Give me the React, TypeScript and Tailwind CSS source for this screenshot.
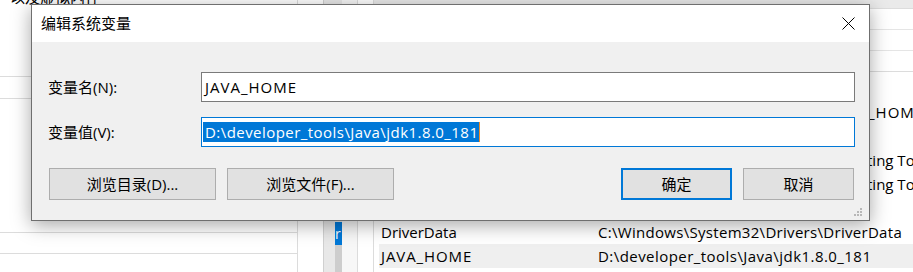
import React from 'react'

const ui = "font-['Open_Sans','Noto_Sans_CJK_SC',sans-serif]"

//=========Background window rows=========

const rows = [
  { name: '', value: '_HOME', pad: 'pl-[270px] tracking-[1px]' },
  { name: '', value: '', pad: '' },
  { name: '', value: 'ting Tools', pad: 'pl-[269px]' },
  { name: '', value: 'ting Tools', pad: 'pl-[269px]' },
  { name: '', value: '', pad: '' },
  { name: 'DriverData', value: 'C:\\Windows\\System32\\Drivers\\DriverData', pad: 'tracking-[0.3px]' },
  {
    name: 'JAVA_HOME',
    value: 'D:\\developer_tools\\Java\\jdk1.8.0_181',
    pad: 'tracking-[0.45px]',
    active: true,
  },
]

function WinButton({
  label,
  width,
  primary = false,
}: {
  label: string
  width: string
  primary?: boolean
}): React.ReactElement {
  return (
    <button
      className={`${width} h-[32px] bg-[#e1e1e1] text-[15px] text-black ${
        primary ? 'border-2 border-[#0078d7]' : 'border border-[#adadad]'
      }`}
    >
      {label}
    </button>
  )
}

export default function App(): React.ReactElement {
  return (
    <div className={`relative w-[913px] h-[272px] overflow-hidden bg-white ${ui} text-[15px] text-black`}>
      {/* =========Background window========= */}
      <div className="flex h-full">
        <div className="w-[298px] shrink-0 h-full border-r border-[#dcdcdc] flex flex-col">
          <div className="h-[89px] pl-[10px] -mt-[13px] leading-[20px]">以及虚拟内存</div>
          <div className="h-[22px] border-t border-[#dcdcdc]" />
          <div className="flex-1 border-t border-[#dcdcdc]" />
          <div className="h-[21px] border-t border-[#dcdcdc] bg-white" />
          <div className="h-[19px] border-t border-[#dcdcdc]" />
        </div>
        <div className="w-[25px] shrink-0 h-full bg-white" />
        <div className="w-[12px] shrink-0 h-full bg-[#e8e8e8] border-l border-[#d0d0d0]" />
        <div className="w-[7px] shrink-0 h-full flex flex-col">
          <div className="h-[222px] bg-[#e8e8e8]" />
          <div className="h-[23px] bg-[#0078d7] text-white text-[14px] leading-[23px] overflow-hidden">r</div>
          <div className="flex-1 bg-[#cdcdcd]" />
        </div>
        <div className="w-[16px] shrink-0 h-full bg-[#f7f7f7] border-r border-[#dcdcdc]" />
        <div className="w-[16px] shrink-0 h-full bg-white border-r border-[#dcdcdc]" />
        <div className="flex-1 min-w-0 overflow-hidden h-full flex flex-col">
          <div className="h-[9px] bg-[#eaeaea] border-b border-[#dcdcdc]" />
          <div className="h-[21px] border-b border-[#e5e5e5]" />
          <div className="h-[21px] border-b border-[#e5e5e5]" />
          <div className="h-[21px] border-b border-[#dcdcdc]" />
          <div className="h-[28px]" />
          {rows.map((r, i) => (
            <div
              key={i}
              className={`h-[24px] flex items-center ${r.active ? 'bg-[#efefef] ml-[5px]' : ''}`}
            >
              <div
                className={`${
                  r.active ? 'w-[219px] pl-[2px] tracking-[0.9px]' : 'w-[224px] pl-[7px]'
                } shrink-0 whitespace-nowrap`}
              >
                {r.name}
              </div>
              <div className={`whitespace-nowrap ${r.pad}`}>{r.value}</div>
            </div>
          ))}
        </div>
      </div>

      {/* =========Edit dialog========= */}
      <div className="absolute left-[31px] top-[4px] w-[839px] h-[217px] border border-[#6f6f6f] bg-[#f0f0f0] shadow-[0_4px_18px_rgba(0,0,0,0.35)] flex flex-col">
        <div className="h-[37px] bg-white flex items-center justify-between pl-[9px] pr-[14px]">
          <span>编辑系统变量</span>
          <svg width="13" height="13" viewBox="0 0 13 13" fill="none" stroke="#000" strokeWidth="1">
            <path d="M0.5 0.5L12.5 12.5M12.5 0.5L0.5 12.5" />
          </svg>
        </div>
        <div className="relative flex-1 pl-[16px] pr-[14px] pt-[30px]">
          <div className="grid grid-cols-[153px_1fr] gap-y-[15px] items-center">
            <span>变量名(N):</span>
            <div className="h-[30px] bg-white border border-[#7a7a7a] flex items-center pl-[3px] tracking-[1px]">
              JAVA_HOME
            </div>
            <span>变量值(V):</span>
            <div className="h-[30px] bg-white border border-[#0078d7] flex items-center pl-[1px]">
              <span className="bg-[#0078d7] text-white h-[20px] leading-[20px] pl-[2px] pr-[1px] tracking-[0.45px]">
                D:\developer_tools\Java\jdk1.8.0_181
              </span>
              <span className="w-px h-[20px] bg-[#f08c2a]" />
            </div>
          </div>
          <div className="flex mt-[21px] pl-px">
            <div className="flex gap-[11px]">
              <WinButton label="浏览目录(D)..." width="w-[167px]" />
              <WinButton label="浏览文件(F)..." width="w-[167px]" />
            </div>
            <div className="ml-auto flex gap-[11px] pr-px">
              <WinButton label="确定" width="w-[111px]" primary />
              <WinButton label="取消" width="w-[111px]" />
            </div>
          </div>
          <svg className="absolute right-[6px] bottom-[2px]" width="10" height="10" viewBox="0 0 10 10" fill="#b8b8b8">
            <rect x="7" y="0" width="2" height="2" />
            <rect x="4" y="3" width="2" height="2" />
            <rect x="7" y="3" width="2" height="2" />
            <rect x="1" y="6" width="2" height="2" />
            <rect x="4" y="6" width="2" height="2" />
            <rect x="7" y="6" width="2" height="2" />
          </svg>
        </div>
      </div>
    </div>
  )
}
